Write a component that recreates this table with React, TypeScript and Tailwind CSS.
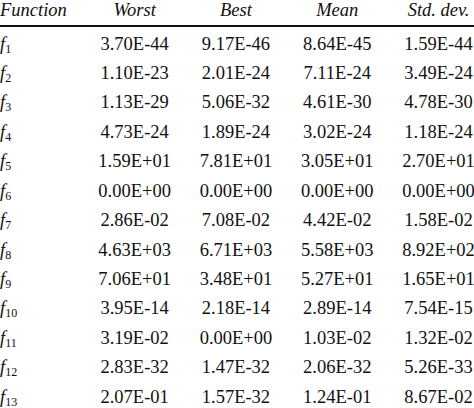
import React from "react";

const rows: [string, string, string, string, string][] = [
  ["1", "3.70E-44", "9.17E-46", "8.64E-45", "1.59E-44"],
  ["2", "1.10E-23", "2.01E-24", "7.11E-24", "3.49E-24"],
  ["3", "1.13E-29", "5.06E-32", "4.61E-30", "4.78E-30"],
  ["4", "4.73E-24", "1.89E-24", "3.02E-24", "1.18E-24"],
  ["5", "1.59E+01", "7.81E+01", "3.05E+01", "2.70E+01"],
  ["6", "0.00E+00", "0.00E+00", "0.00E+00", "0.00E+00"],
  ["7", "2.86E-02", "7.08E-02", "4.42E-02", "1.58E-02"],
  ["8", "4.63E+03", "6.71E+03", "5.58E+03", "8.92E+02"],
  ["9", "7.06E+01", "3.48E+01", "5.27E+01", "1.65E+01"],
  ["10", "3.95E-14", "2.18E-14", "2.89E-14", "7.54E-15"],
  ["11", "3.19E-02", "0.00E+00", "1.03E-02", "1.32E-02"],
  ["12", "2.83E-32", "1.47E-32", "2.06E-32", "5.26E-33"],
  ["13", "2.07E-01", "1.57E-32", "1.24E-01", "8.67E-02"],
];

export default function App() {
  return (
    <div className="font-serif w-[474px] h-[408px] overflow-hidden bg-white text-[#111] text-[18.5px]">
      <div className="w-[489px] font-['Liberation_Serif','Times_New_Roman',serif]">
        <div className="grid grid-cols-[84px_101.3px_101.3px_101.3px_101.3px] h-[25px] leading-[20px] italic">
          <div className="whitespace-nowrap">Function</div>
          <div className="text-center whitespace-nowrap">Worst</div>
          <div className="text-center whitespace-nowrap">Best</div>
          <div className="text-center whitespace-nowrap">Mean</div>
          <div className="text-center whitespace-nowrap">Std. dev.</div>
        </div>
        <div className="h-[1.5px] bg-[#111]" />
        <div className="mt-[3px] flex flex-col">
          {rows.map((r) => (
            <div
              key={r[0]}
              className="grid grid-cols-[84px_101.3px_101.3px_101.3px_101.3px] h-[29.45px] leading-[29.45px]"
            >
              <div className="whitespace-nowrap">
                <span className="italic">f</span>
                <span className="text-[12px] leading-none align-[-3px]">{r[0]}</span>
              </div>
              <div className="text-center whitespace-nowrap">{r[1]}</div>
              <div className="text-center whitespace-nowrap">{r[2]}</div>
              <div className="text-center whitespace-nowrap">{r[3]}</div>
              <div className="text-center whitespace-nowrap">{r[4]}</div>
            </div>
          ))}
        </div>
      </div>
    </div>
  );
}
